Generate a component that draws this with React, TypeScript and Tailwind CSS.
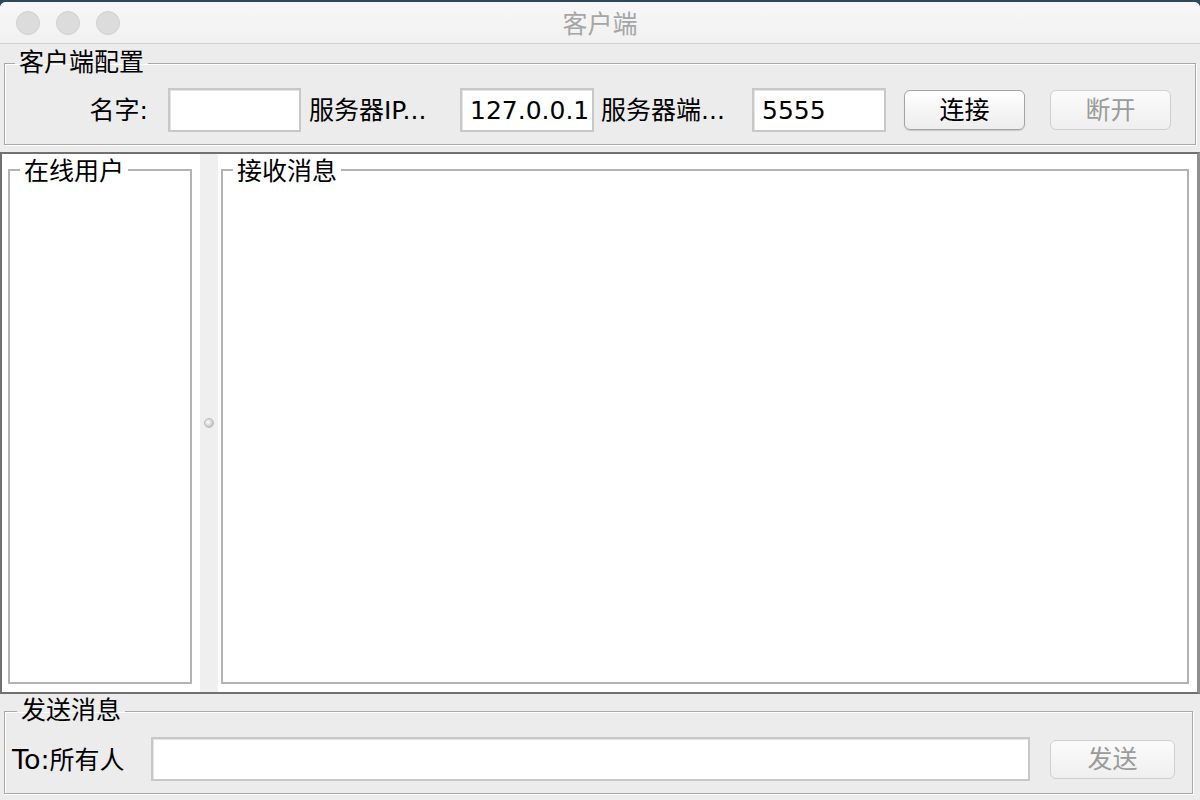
import React from "react";

const font = "font-['DejaVu_Sans','Noto_Sans_CJK_SC',sans-serif]";

function TextInput({ value, w }: { value?: string; w: string }) {
  return (
    <div
      className={`${w} h-[44px] shrink-0 border-2 border-[#c8c8c8] bg-white shadow-[inset_1px_1px_0_#e4e4e4] flex items-center pl-[8px] text-[25px] leading-none text-black`}
    >
      {value}
    </div>
  );
}

function Btn({ label, disabled, w, h }: { label: string; disabled?: boolean; w: string; h: string }) {
  return (
    <div
      className={`${w} ${h} shrink-0 rounded-[6px] border flex items-center justify-center text-[25px] leading-none ${
        disabled
          ? "border-[#cfcfcf] text-[#9b9b9b] bg-gradient-to-b from-[#fbfbfb] to-[#efefef]"
          : "border-[#a3a3a3] text-black bg-gradient-to-b from-white to-[#ededed] shadow-[0_1px_1px_rgba(0,0,0,0.15)]"
      }`}
    >
      {label}
    </div>
  );
}

export default function App() {
  return (
    <div className={`w-[1200px] h-[800px] bg-[#2c4a5a] pt-[2px] ${font} overflow-hidden`}>
      <div className="w-[1200px] h-[798px] bg-[#ececec] rounded-t-[6px] flex flex-col overflow-hidden">
        {/* Title bar */}
        <div className="h-[42px] shrink-0 bg-gradient-to-b from-[#f7f7f7] to-[#f1f1f1] border-b border-[#d2d2d2] flex items-center">
          <div className="flex items-center gap-[16px] pl-[16px]">
            <div className="w-[24px] h-[24px] rounded-full bg-[#dcdcdc] border border-[#d1d1d1]" />
            <div className="w-[24px] h-[24px] rounded-full bg-[#dcdcdc] border border-[#d1d1d1]" />
            <div className="w-[24px] h-[24px] rounded-full bg-[#dcdcdc] border border-[#d1d1d1]" />
          </div>
          <div className="flex-1 text-center text-[25px] leading-none text-[#a6a6a6] pr-[120px] pt-[4px]">
            客户端
          </div>
        </div>

        {/* Config group */}
        <fieldset className="mt-[4px] mx-[4px] h-[97px] shrink-0 border border-[#a9a9a9] shadow-[inset_1px_1px_0_#fff,1px_1px_0_#fff] px-0">
          <legend className="ml-[10px] px-[4px] text-[25px] leading-[30px] text-black">客户端配置</legend>
          <div className="flex items-center pt-[10px]">
            <div className="w-[143px] text-right text-[25px] leading-none whitespace-nowrap">名字:</div>
            <div className="w-[20px] shrink-0" />
            <TextInput w="w-[133px]" />
            <div className="w-[8px] shrink-0" />
            <div className="w-[151px] shrink-0 text-[25px] leading-none whitespace-nowrap">服务器IP...</div>
            <TextInput w="w-[134px]" value="127.0.0.1" />
            <div className="w-[7px] shrink-0" />
            <div className="w-[151px] shrink-0 text-[25px] leading-none whitespace-nowrap">服务器端...</div>
            <TextInput w="w-[134px]" value="5555" />
            <div className="w-[18px] shrink-0" />
            <Btn label="连接" w="w-[121px]" h="h-[40px]" />
            <div className="w-[25px] shrink-0" />
            <Btn label="断开" disabled w="w-[121px]" h="h-[40px]" />
          </div>
        </fieldset>

        {/* Split pane */}
        <div className="mt-[7px] h-[542px] shrink-0 border-2 border-[#707070] border-r-[#8f8f8f] border-r-[3px] flex">
          <div className="w-[198px] shrink-0 bg-white pt-[1px] pl-[6px] pr-[8px] pb-[8px] flex">
            <fieldset className="flex-1 border-2 border-[#b3b3b3] min-w-0">
              <legend className="ml-[10px] px-[4px] text-[25px] leading-[30px] text-black">
                <span className="relative top-[2px]">在线用户</span>
              </legend>
            </fieldset>
          </div>
          <div className="w-[18px] shrink-0 bg-[#efefef] flex items-center justify-center">
            <div className="w-[10px] h-[10px] rounded-full bg-[radial-gradient(circle_at_40%_40%,#ffffff,#a8a8a8)] border border-[#bdbdbd] ml-[-1px]" />
          </div>
          <div className="flex-1 bg-white pt-[1px] pl-[3px] pr-[8px] pb-[8px] flex">
            <fieldset className="flex-1 border-2 border-[#b3b3b3] min-w-0">
              <legend className="ml-[10px] px-[4px] text-[25px] leading-[30px] text-black">
                <span className="relative top-[2px]">接收消息</span>
              </legend>
            </fieldset>
          </div>
        </div>

        {/* Send group */}
        <fieldset className="mt-[2px] mx-[4px] mr-[7px] h-[98px] shrink-0 border border-[#a9a9a9] shadow-[inset_1px_1px_0_#fff,1px_1px_0_#fff] px-0">
          <legend className="ml-[12px] px-[4px] text-[25px] leading-[30px] text-black">发送消息</legend>
          <div className="flex items-center pt-[11px]">
            <div className="w-[7px] shrink-0" />
            <div className="w-[139px] shrink-0 text-[25px] leading-none whitespace-nowrap">
              <span className="text-[27px]">To:</span>所有人
            </div>
            <TextInput w="w-[879px]" />
            <div className="w-[20px] shrink-0" />
            <Btn label="发送" disabled w="w-[125px]" h="h-[39px]" />
          </div>
        </fieldset>
      </div>
    </div>
  );
}
